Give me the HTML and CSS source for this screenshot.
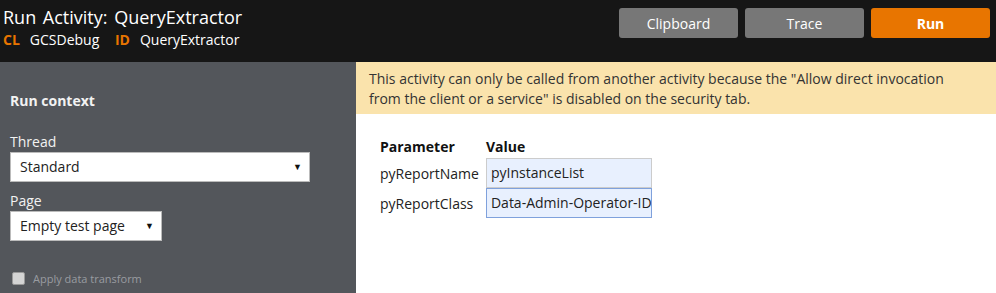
FILE: index.html
```html
<!DOCTYPE html>
<html lang="en">
<head>
  <meta charset="UTF-8">
  <meta name="viewport" content="width=device-width, initial-scale=1.0">
  <title>Run Activity</title>
  <link rel="stylesheet" href="styles.css">
</head>
<body>
  <div class="header">
    <div class="title-block">
      <div class="title">Run Activity: QueryExtractor</div>
      <div class="subtitle">
        <span class="tag">CL</span><span class="tag-value">GCSDebug</span>
        <span class="tag">ID</span><span class="tag-value">QueryExtractor</span>
      </div>
    </div>
    <div class="header-buttons">
      <button class="btn">Clipboard</button>
      <button class="btn">Trace</button>
      <button class="btn btn-run">Run</button>
    </div>
  </div>

  <div class="main">
    <!-- left side -->
    <div class="sidebar">
      <div class="side-title">Run context</div>
      <label class="field-label">Thread</label>
      <div class="select select-wide">Standard<span class="arrow">&#9660;</span></div>
      <label class="field-label">Page</label>
      <div class="select select-small">Empty test page<span class="arrow">&#9660;</span></div>
      <div class="check-row">
        <span class="checkbox"></span>
        <span class="check-label">Apply data transform</span>
      </div>
    </div>

    <!-- right side -->
    <div class="content">
      <div class="notice">
        This activity can only be called from another activity because the "Allow direct invocation<br>
        from the client or a service" is disabled on the security tab.
      </div>
      <table class="params">
        <tr>
          <th>Parameter</th>
          <th>Value</th>
        </tr>
        <tr>
          <td class="param-name">pyReportName</td>
          <td><div class="param-input">pyInstanceList</div></td>
        </tr>
        <tr>
          <td class="param-name">pyReportClass</td>
          <td><div class="param-input focused">Data-Admin-Operator-ID</div></td>
        </tr>
      </table>
    </div>
  </div>
</body>
</html>
```

FILE: styles.css
```css
body {
  margin: 0;
  font-family: "Open Sans", "Noto Sans", sans-serif;
  background-color: #fff;
  width: 996px;
  height: 293px;
  overflow: hidden;
}

.header {
  background-color: #161616;
  height: 62px;
  display: flex;
  justify-content: space-between;
}

.title-block {
  padding: 4px 0 0 3px;
  color: #fff;
}

.title {
  font-size: 18px;
  line-height: 26px;
  word-spacing: 2px;
}

.subtitle {
  font-size: 14px;
  line-height: 20px;
}

.tag {
  color: #e87500;
  font-weight: bold;
  margin-right: 10px;
}

.tag-value {
  margin-right: 12px;
}

.header-buttons {
  display: flex;
  gap: 7px;
  padding: 8px 6px 0 0;
}

.btn {
  width: 119px;
  height: 30px;
  border: none;
  border-radius: 3px;
  background-color: #777;
  color: #fff;
  font-family: "Open Sans", "Noto Sans", sans-serif;
  font-size: 14px;
  cursor: pointer;
}

.btn-run {
  background-color: #e87500;
  font-weight: bold;
}

.main {
  display: flex;
  height: 231px;
}

.sidebar {
  width: 346px;
  background-color: #53565b;
  padding: 29px 0 0 10px;
  color: #f2f2f2;
}

.side-title {
  font-size: 14px;
  font-weight: bold;
  line-height: 20px;
  margin-bottom: 21px;
}

.field-label {
  display: block;
  font-size: 14px;
  line-height: 20px;
}

.select {
  background-color: #fff;
  border: 1px solid #bbb;
  height: 28px;
  line-height: 28px;
  color: #222;
  font-size: 14px;
  padding-left: 9px;
  position: relative;
  margin-bottom: 9px;
}

.select-wide {
  width: 289px;
}

.select-small {
  width: 141px;
}

.arrow {
  position: absolute;
  right: 7px;
  top: 0;
  font-size: 9px;
  color: #111;
}

.check-row {
  display: flex;
  align-items: center;
  margin-top: 30px;
  margin-left: 2px;
}

.checkbox {
  width: 11px;
  height: 11px;
  background-color: #d4d4d4;
  border: 1px solid #999;
  border-radius: 2px;
  margin-right: 8px;
}

.check-label {
  font-size: 11px;
  color: #999ca1;
}

.content {
  flex: 1;
}

.notice {
  background-color: #fae3ac;
  color: #333;
  font-size: 14px;
  font-stretch: 90%;
  line-height: 20px;
  padding: 7px 12px 7px 13px;
  height: 38px;
  white-space: nowrap;
}

.params {
  border-collapse: collapse;
  margin: 22px 0 0 24px;
  font-size: 14px;
  color: #222;
}

.params th {
  text-align: left;
  font-weight: bold;
  padding: 0 6px 0 0;
  line-height: 22px;
  color: #111;
}

.params td {
  padding: 0;
}

.param-name {
  padding-right: 7px !important;
}

.param-input {
  width: 160px;
  height: 28px;
  line-height: 28px;
  background-color: #e8f0fe;
  border: 1px solid #ccc;
  padding-left: 4px;
  white-space: nowrap;
  overflow: hidden;
  font-size: 14px;
}

.param-input.focused {
  border-color: #7fa1dc;
}
```
